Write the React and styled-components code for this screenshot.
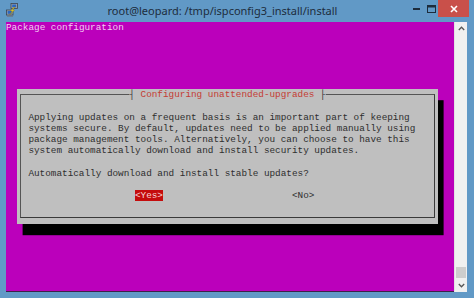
import React from "react";
import styled, { createGlobalStyle } from "styled-components";

// terminal grid: 80 x 24 cells, 5.6125 x 11.2 px
const ROW = 11.2;

const Global = createGlobalStyle`
  html, body { margin: 0; padding: 0; background: #6199c6; }
`;

const Window = styled.div`
  width: 474px;
  height: 298px;
  background: #6199c6;
  display: flex;
  flex-direction: column;
  overflow: hidden;
`;

const TitleBar = styled.div`
  height: 22px;
  display: flex;
  align-items: flex-start;
`;

const AppIcon = styled.svg`
  margin: 3px 0 0 6px;
  flex: none;
`;

const Caption = styled.div`
  flex: 1;
  text-align: center;
  font-family: "Noto Sans", "Open Sans", sans-serif;
  font-size: 11px;
  line-height: 22px;
  color: #1d2c3c;
  padding-left: 20px;
`;

const Controls = styled.div`
  display: flex;
  align-items: flex-start;
  margin-right: 5px;
`;

const CtrlButton = styled.div`
  width: ${p => p.w}px;
  height: 17px;
  display: flex;
  align-items: center;
  justify-content: center;
  background: ${p => p.bg || "transparent"};
`;

const Body = styled.div`
  display: flex;
  padding: 0 7px 0 6px;
`;

const Terminal = styled.div`
  width: 449px;
  height: ${24 * ROW}px;
  background: #bb00bb;
  border-bottom: 1px solid #3c2148;
  font-family: "Liberation Mono", "DejaVu Sans Mono", monospace;
  font-size: 9.354px;
  line-height: ${ROW}px;
  white-space: pre;
  overflow: hidden;
`;

const Line = styled.div`
  height: ${ROW}px;
  color: ${p => p.color || "#2e2e2e"};
`;

const Blank = styled.div`
  height: ${p => p.rows * ROW}px;
`;

const Dialog = styled.div`
  position: relative;
  margin-left: 2ch;
  width: 75ch;
  height: ${12 * ROW}px;
  background: #bfbfbf;
  box-shadow: 1ch ${ROW}px 0 #000;
`;

const Frame = styled.div`
  position: absolute;
  top: ${ROW / 2 - 0.5}px;
  bottom: ${ROW / 2 - 0.5}px;
  left: calc(0.5ch - 0.5px);
  right: calc(0.5ch - 0.5px);
  border: 1px solid #555;
  border-right-color: #3a3a3a;
  border-bottom-color: #3a3a3a;
`;

const Content = styled.div`
  position: relative;
  padding: 0 2ch;
`;

const TitleRow = styled.div`
  height: ${ROW}px;
  display: flex;
  justify-content: center;
`;

const Title = styled.span`
  background: #bfbfbf;
  color: #333;
`;

const TitleText = styled.span`
  color: #c43c34;
`;

const ButtonRow = styled.div`
  height: ${ROW}px;
  display: flex;
  padding-left: 19ch;
  gap: 23ch;
`;

const Button = styled.span`
  background: ${p => (p.active ? "#c40c0c" : "transparent")};
  color: ${p => (p.active ? "#f6d6d6" : "#2e2e2e")};
`;

const Scrollbar = styled.div`
  width: 12px;
  height: ${24 * ROW + 1}px;
  background: #f0f0f0;
  border-left: 1px solid #e2e2e2;
  display: flex;
  flex-direction: column;
  align-items: center;
`;

const Arrow = styled.div`
  height: 12px;
  display: flex;
  align-items: center;
  justify-content: center;
`;

const Track = styled.div`
  flex: 1;
  width: 100%;
  display: flex;
  flex-direction: column;
  justify-content: flex-end;
`;

const Thumb = styled.div`
  height: 11px;
  margin: 0 1px 2px;
  background: #cdcdcd;
`;

const PuttyIcon = () => (
  <AppIcon width="12" height="14" viewBox="0 0 12 14">
    <rect x="5" y="0.5" width="6.5" height="5" fill="#9aa3ad" stroke="#3b4450" strokeWidth="0.8" />
    <rect x="6.2" y="1.5" width="4" height="2.8" fill="#2a66c2" />
    <rect x="0.5" y="7" width="6.5" height="5" fill="#9aa3ad" stroke="#3b4450" strokeWidth="0.8" />
    <rect x="1.6" y="8" width="4.2" height="2.8" fill="#2a66c2" />
    <rect x="1" y="12.3" width="6" height="1.4" fill="#6d7580" />
    <path d="M8 4 L4.5 8 L6.5 8 L3.5 12 L8.5 7 L6.5 7 L9 4 Z" fill="#f3d829" stroke="#8a7210" strokeWidth="0.4" />
  </AppIcon>
);

const Chevron = ({ up }) => (
  <svg width="7" height="5" viewBox="0 0 7 5">
    <path d={up ? "M0.8 4 L3.5 1.2 L6.2 4" : "M0.8 1 L3.5 3.8 L6.2 1"} fill="none" stroke="#555" strokeWidth="1.3" />
  </svg>
);

const bodyLines = [
  "Applying updates on a frequent basis is an important part of keeping",
  "systems secure. By default, updates need to be applied manually using",
  "package management tools. Alternatively, you can choose to have this",
  "system automatically download and install security updates.",
];

export default function App() {
  return (
    <>
      <Global />
      <Window>
        <TitleBar>
          <PuttyIcon />
          <Caption>root@leopard: /tmp/ispconfig3_install/install</Caption>
          <Controls>
            <CtrlButton w={18}>
              <svg width="7" height="3" viewBox="0 0 7 3"><rect x="0" y="1" width="7" height="2" fill="#1d2c3c" /></svg>
            </CtrlButton>
            <CtrlButton w={13}>
              <svg width="9" height="8" viewBox="0 0 9 8"><rect x="0.5" y="0.5" width="8" height="7" fill="none" stroke="#1d2c3c" /><rect x="0.5" y="0.5" width="8" height="2" fill="#1d2c3c" /></svg>
            </CtrlButton>
            <CtrlButton w={31} bg="#c9504a">
              <svg width="8" height="8" viewBox="0 0 8 8"><path d="M1 1 L7 7 M7 1 L1 7" stroke="#fff" strokeWidth="1.6" /></svg>
            </CtrlButton>
          </Controls>
        </TitleBar>
        <Body>
          <Terminal>
            <Line color="#f3cbf3">Package configuration</Line>
            <Blank rows={5} />
            <Dialog>
              <Frame />
              <Content>
                <TitleRow>
                  <Title>┤ <TitleText>Configuring unattended-upgrades</TitleText> ├</Title>
                </TitleRow>
                <Blank rows={1} />
                {bodyLines.map(l => (
                  <Line key={l}>{l}</Line>
                ))}
                <Blank rows={1} />
                <Line>Automatically download and install stable updates?</Line>
                <Blank rows={1} />
                <ButtonRow>
                  <Button active>&lt;Yes&gt;</Button>
                  <Button>&lt;No&gt;</Button>
                </ButtonRow>
              </Content>
            </Dialog>
          </Terminal>
          <Scrollbar>
            <Arrow><Chevron up /></Arrow>
            <Track><Thumb /></Track>
            <Arrow><Chevron /></Arrow>
          </Scrollbar>
        </Body>
      </Window>
    </>
  );
}
